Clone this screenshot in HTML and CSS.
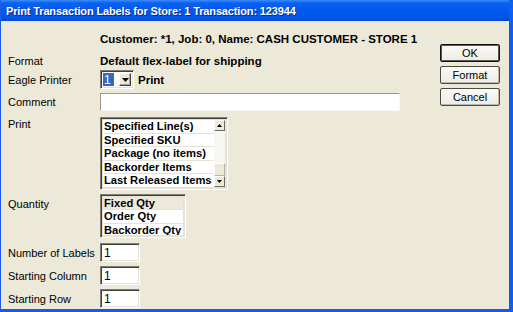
FILE: index.html
```html
<!DOCTYPE html>
<html lang="en">
<head>
<meta charset="UTF-8">
<title>Print Transaction Labels</title>
<link rel="stylesheet" href="styles.css">
</head>
<body>
    <div class="window">
        <div class="titlebar">Print Transaction Labels for Store: 1 Transaction: 123944</div>
        <div class="client">
            <div class="form">
                <div class="row row-customer">
                    <span class="label"></span>
                    <b>Customer: *1, Job: 0, Name: CASH CUSTOMER - STORE 1</b>
                </div>
                <div class="row row-format">
                    <span class="label">Format</span>
                    <b>Default flex-label for shipping</b>
                </div>
                <div class="row row-printer">
                    <span class="label">Eagle Printer</span>
                    <div class="combo">
                        <span class="combo-value">1</span>
                        <span class="combo-btn">
                            <svg width="7" height="4" viewBox="0 0 7 4"><path d="M0 0h7L3.5 4z" fill="#000"/></svg>
                        </span>
                    </div>
                    <b class="after-combo">Print</b>
                </div>
                <div class="row row-comment">
                    <span class="label">Comment</span>
                    <div class="field field-wide"></div>
                </div>
                <div class="row row-print">
                    <span class="label">Print</span>
                    <div class="listbox list-print">
                        <div class="items">
                            <div class="item">Specified Line(s)</div>
                            <div class="item">Specified SKU</div>
                            <div class="item">Package (no items)</div>
                            <div class="item">Backorder Items</div>
                            <div class="item">Last Released Items</div>
                        </div>
                        <div class="scrollbar">
                            <span class="sb-btn">
                                <svg width="5" height="3" viewBox="0 0 5 3"><path d="M0 3h5L2.5 0z" fill="#000"/></svg>
                            </span>
                            <span class="sb-track"></span>
                            <span class="sb-thumb"></span>
                            <span class="sb-btn">
                                <svg width="5" height="3" viewBox="0 0 5 3"><path d="M0 0h5L2.5 3z" fill="#000"/></svg>
                            </span>
                        </div>
                    </div>
                </div>
                <div class="row row-qty">
                    <span class="label">Quantity</span>
                    <div class="listbox list-qty">
                        <div class="items">
                            <div class="item item-current">Fixed Qty</div>
                            <div class="item">Order Qty</div>
                            <div class="item">Backorder Qty</div>
                        </div>
                    </div>
                </div>
                <div class="row row-num">
                    <span class="label">Number of Labels</span>
                    <div class="field field-small">1</div>
                </div>
                <div class="row row-num">
                    <span class="label">Starting Column</span>
                    <div class="field field-small">1</div>
                </div>
                <div class="row row-num">
                    <span class="label">Starting Row</span>
                    <div class="field field-small">1</div>
                </div>
            </div>
            <div class="buttons">
                <button class="btn btn-default">OK</button>
                <button class="btn">Format</button>
                <button class="btn">Cancel</button>
            </div>
        </div>
    </div>
</body>
</html>
```

FILE: styles.css
```css
body {
    margin: 0;
    padding: 0;
    font-family: "Liberation Sans", Arial, sans-serif;
    font-size: 11px;
    color: #000;
}
.window {
    width: 513px;
    height: 312px;
    box-sizing: border-box;
    border-left: 1px solid #1c5be8;
    border-right: 4px solid #0f5ef2;
    border-bottom: 3px solid #0f5ef2;
    background: #0f5ef2;
    display: flex;
    flex-direction: column;
}
.titlebar {
    height: 21px;
    line-height: 22px;
    padding-left: 5px;
    color: #fff;
    font-weight: bold;
    font-size: 11px;
    letter-spacing: -0.14px;
    text-shadow: 1px 1px 0 #0a2a8a;
    background: linear-gradient(#3a8cfb 0, #0c61f0 3px, #0058ee 50%, #0055e8 85%, #0049d0 100%);
    white-space: nowrap;
}
.client {
    flex: 1;
    background: #ece9d8;
    display: flex;
}
.form {
    flex: 1;
    padding-left: 7px;
}
.form b {
    font-size: 11.5px;
}
.row {
    display: flex;
    align-items: center;
}
.label {
    width: 92px;
    flex: none;
}
.row-customer {
    margin-top: 11px;
    height: 14px;
}
.row-format {
    margin-top: 8px;
    height: 14px;
}
.row-printer {
    margin-top: 2px;
    height: 19px;
}
.row-comment {
    margin-top: 4px;
    height: 18px;
}
.row-print {
    margin-top: 6px;
    align-items: flex-start;
}
.row-print .label {
    line-height: 14px;
}
.row-qty {
    margin-top: 4px;
    align-items: flex-start;
}
.row-qty .label {
    padding-top: 3px;
    line-height: 14px;
}
.row-num {
    margin-top: 4px;
    height: 19px;
}
.row-qty + .row-num {
    margin-top: 5px;
}

/* sunken controls */
.field,
.combo,
.listbox {
    box-sizing: border-box;
    border: 1px solid;
    border-color: #7f7d74 #fff #fff #7f7d74;
    box-shadow: inset 1px 1px 0 #3f3f3f, inset -1px -1px 0 #e4e2d8;
    background: #fff;
}
.field {
    height: 100%;
    padding: 3px 0 0 3px;
    font-size: 12px;
    line-height: 13px;
}
.field-wide {
    width: 300px;
    border-color: #9a988f #f8f8f4 #f8f8f4 #9a988f;
    box-shadow: none;
}
.field-small {
    width: 40px;
}
.combo {
    width: 34px;
    height: 19px;
    display: flex;
    align-items: center;
    padding: 2px;
}
.combo-value {
    width: 11px;
    height: 100%;
    background: #316ac5;
    color: #fff;
    font-size: 12px;
    line-height: 15px;
    padding-left: 1px;
    box-sizing: border-box;
}
.combo-btn {
    margin-left: auto;
    width: 12px;
    height: 100%;
    box-sizing: border-box;
    background: #ece9d8;
    border: 1px solid;
    border-color: #fff #404040 #404040 #fff;
    box-shadow: inset -1px -1px 0 #a5a293;
    display: flex;
    align-items: center;
    justify-content: center;
}
.after-combo {
    margin-left: 4px;
}

.listbox {
    display: flex;
    padding: 2px;
    background: #e6e3d6;
}
.list-print {
    width: 128px;
    height: 73px;
}
.list-qty {
    width: 86px;
    height: 44px;
}
.items {
    flex: 1;
    min-width: 0;
    display: flex;
    flex-direction: column;
    gap: 1px;
}
.item {
    height: 13px;
    line-height: 13px;
    background: #fff;
    font-weight: bold;
    font-size: 11.2px;
    padding-left: 1px;
    white-space: nowrap;
    overflow: hidden;
}
.list-qty .item:last-child {
    height: 12px;
}
.item-current {
    background: #ece9d8;
}
.scrollbar {
    width: 11px;
    flex: none;
    display: flex;
    flex-direction: column;
    background: #f7f6f1;
}
.sb-btn,
.sb-thumb {
    box-sizing: border-box;
    background: #ece9d8;
    border: 1px solid;
    border-color: #fff #6f6d66 #6f6d66 #fff;
    display: flex;
    align-items: center;
    justify-content: center;
}
.sb-btn {
    height: 11px;
}
.sb-track {
    flex: 1;
}
.sb-thumb {
    height: 13px;
    border-color: #fff #b5b2a6 #b5b2a6 #fff;
}

.buttons {
    width: 60px;
    margin: 23px 9px 0 0;
    display: flex;
    flex-direction: column;
    gap: 4px;
}
.btn {
    height: 18px;
    padding: 0;
    font-family: "Liberation Sans", Arial, sans-serif;
    font-size: 11px;
    color: #000;
    background: linear-gradient(#fbfbf8, #ecebe4);
    border: 1px solid #4b4a45;
    border-radius: 2px;
    box-shadow: inset -1px -1px 0 #b9b7ad;
}
.btn-default {
    border-color: #111;
    box-shadow: inset 0 0 0 1px #5a5953;
}
```
